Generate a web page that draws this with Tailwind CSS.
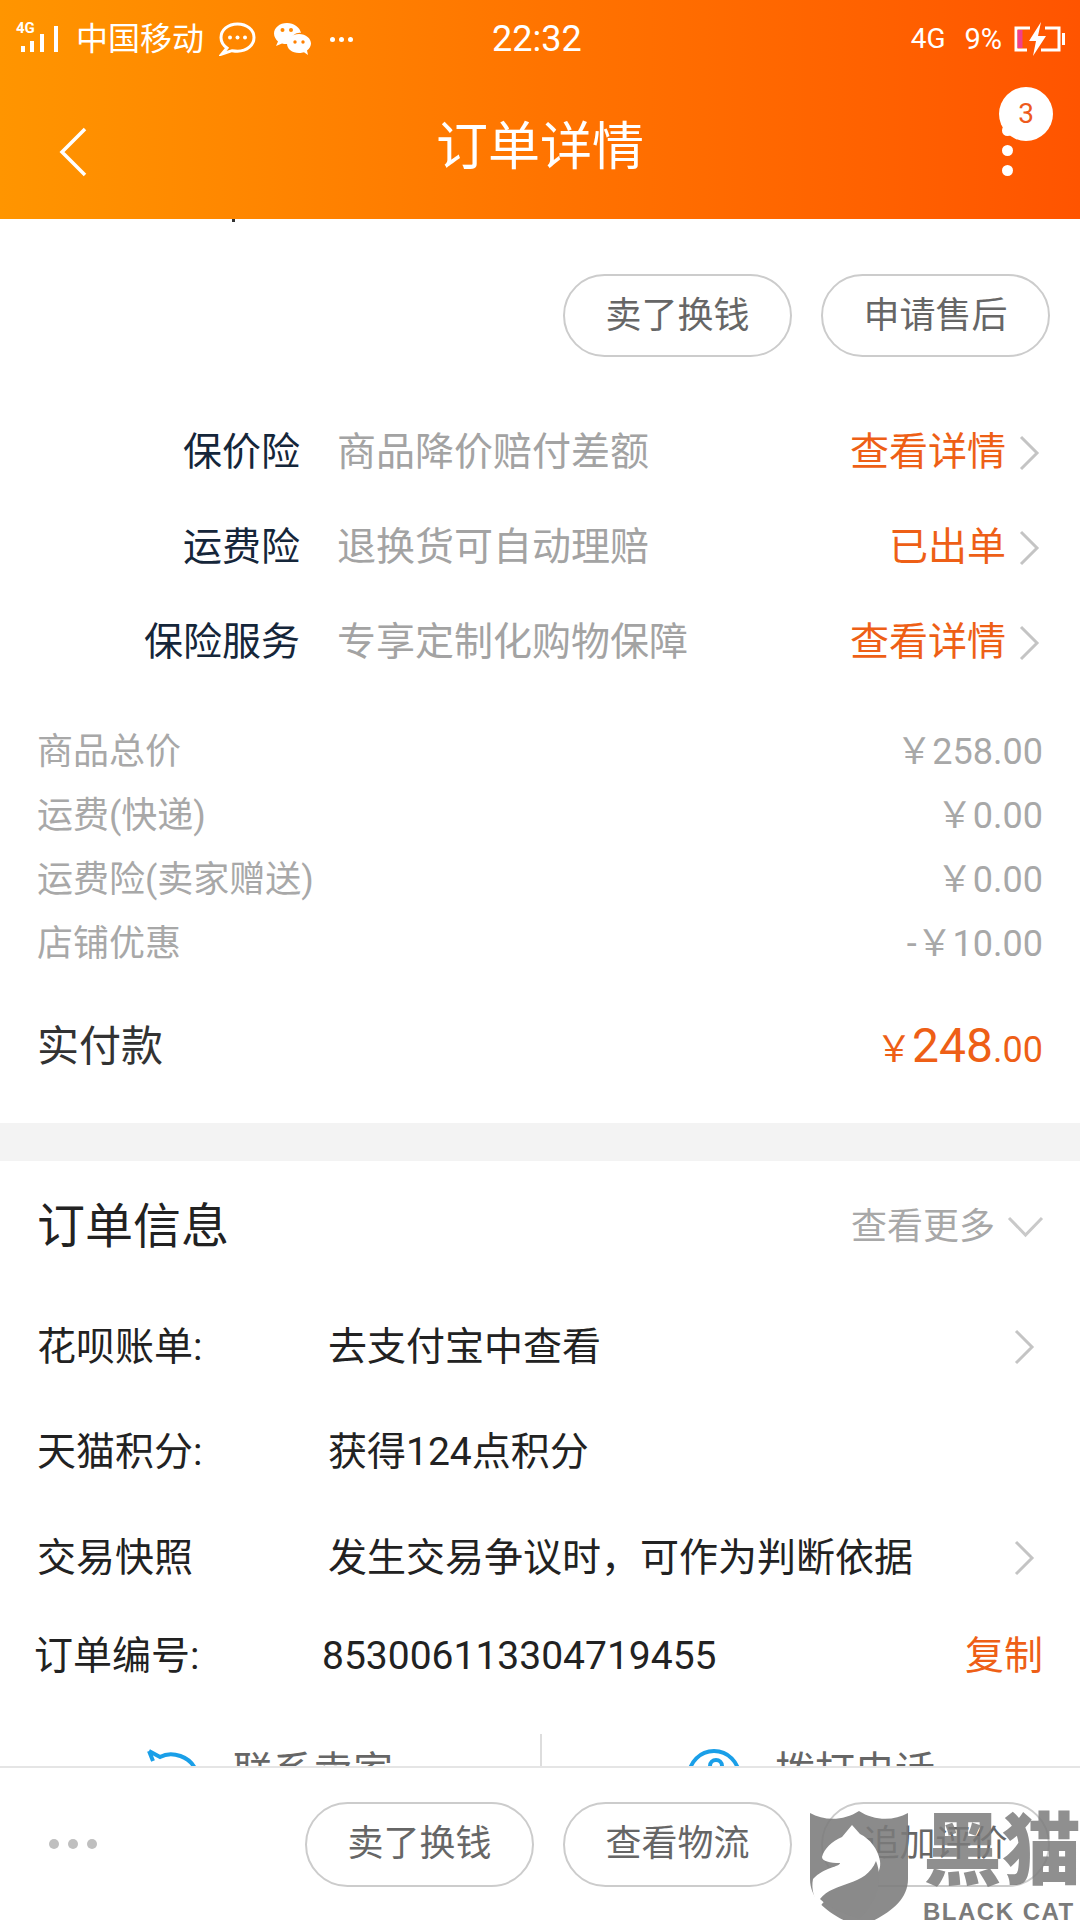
<!DOCTYPE html>
<html lang="zh-CN">
<head>
  <meta charset="UTF-8">
  <title>订单详情</title>
  <script src="https://cdn.jsdelivr.net/npm/@tailwindcss/browser@4"></script>
</head>
<body class="bg-white font-['Roboto','Noto_Sans_CJK_SC',sans-serif]">
<div class="relative flex flex-col w-[1080px] h-[1920px] overflow-hidden bg-white">

  <!-- header -->
  <header class="relative shrink-0 h-[219px] bg-gradient-to-r from-[#ff9500] via-[#ff7400] to-[#ff5400] text-white">
    <div class="relative flex items-center h-[78px] pl-[16px] pr-[15px]">
      <div class="relative w-[46px] h-[30px]">
        <span class="absolute left-0 top-[-3px] text-[15px] font-bold leading-none">4G</span>
        <svg class="absolute left-0 top-0" width="46" height="30" viewBox="0 0 46 30" fill="#fff">
          <rect x="5" y="22" width="4" height="6"/><rect x="14" y="17" width="4" height="11"/><rect x="24" y="10" width="4" height="18"/><rect x="38" y="2" width="4" height="26"/>
        </svg>
      </div>
      <span class="ml-[14px] text-[32px] leading-none">中国移动</span>
      <svg class="ml-[15px]" width="37" height="34" viewBox="0 0 37 34" fill="none">
        <path d="M18.500 2C9 2 2 8 2 15.500C2 20 4.500 23.500 8 26L3 32L13 28.700C15 29 16.500 29.200 18.500 29.200C28 29.200 35 23 35 15.500C35 8 28 2 18.500 2Z" stroke="#fff" stroke-width="3"/>
        <circle cx="11" cy="15.500" r="2" fill="#fff"/><circle cx="18.500" cy="15.500" r="2" fill="#fff"/><circle cx="26" cy="15.500" r="2" fill="#fff"/>
      </svg>
      <svg class="ml-[17px]" width="39" height="34" viewBox="0 0 39 34">
        <path d="M14 1C6.500 1 1 6 1 11.500C1 15 3 17.500 5 19.500L3 24L9 21.500C11 22 13 22.300 15 22C18 12 25 10 28 11C27 5.500 21 1 14 1Z" fill="#fff"/>
        <path d="M26 12C19 12 14 16.500 14 21.500C14 27 19 31 26 31C28 31 29.500 30.700 31 30.200L35 33L34 28.500C36.500 26.500 38 24 38 21.500C38 16.500 33 12 26 12Z" fill="#fff"/>
        <circle cx="9.500" cy="8" r="2" fill="#ff8800"/><circle cx="18" cy="8" r="2" fill="#ff8800"/><circle cx="22" cy="20" r="1.700" fill="#ff8000"/><circle cx="30" cy="20" r="1.700" fill="#ff8000"/>
      </svg>
      <div class="ml-[18px] flex gap-[4px]">
        <span class="w-[5px] h-[5px] rounded-full bg-white"></span><span class="w-[5px] h-[5px] rounded-full bg-white"></span><span class="w-[5px] h-[5px] rounded-full bg-white"></span>
      </div>
      <span class="absolute left-[492px] top-[18px] text-[36px] leading-[42px]">22:32</span>
      <div class="ml-auto flex items-center">
        <span class="text-[28px] leading-none">4G</span>
        <span class="ml-[19px] text-[29px] leading-none">9%</span>
        <svg class="ml-[12px]" width="51" height="34" viewBox="0 0 51 34" fill="none">
          <path d="M16 6H2V28H13" stroke="#fff" stroke-width="3"/>
          <path d="M31 6H45V28H27" stroke="#fff" stroke-width="3"/>
          <rect x="3.500" y="8" width="5" height="18" fill="#f0408c"/>
          <path d="M27 0L15 19H22L19 34L32 14H24Z" fill="#fff"/>
          <rect x="48" y="11" width="3" height="12" fill="#fff"/>
        </svg>
      </div>
    </div>
    <div class="relative flex items-center justify-center h-[141px]">
      <svg class="absolute left-[58px] top-[48px]" width="30" height="52" viewBox="0 0 30 52" fill="none">
        <path d="M27 3L4 26L27 49" stroke="#fff" stroke-width="3.500"/>
      </svg>
      <h1 class="text-[52px] leading-none font-normal mt-[-2px]">订单详情</h1>
      <div class="absolute left-[1002px] top-[47px] flex flex-col gap-[9px]">
        <span class="w-[11px] h-[11px] rounded-full bg-white"></span>
        <span class="w-[11px] h-[11px] rounded-full bg-white"></span>
        <span class="w-[11px] h-[11px] rounded-full bg-white"></span>
      </div>
      <span class="absolute left-[999px] top-[9px] flex items-center justify-center w-[54px] h-[54px] rounded-full bg-white text-[#ee5a1c] text-[28px]">3</span>
    </div>
  </header>

  <!-- scrolled content -->
  <main class="relative flex-1 min-h-0 overflow-hidden">
    <span class="absolute left-[232px] top-0 w-[3px] h-[3px] bg-[#333]"></span>

    <div class="flex justify-end gap-[29px] pt-[55px] pr-[30px]">
      <button class="w-[229px] h-[83px] rounded-full border-2 border-[#cccccc] text-[36px] text-[#666]">卖了换钱</button>
      <button class="w-[229px] h-[83px] rounded-full border-2 border-[#cccccc] text-[36px] text-[#666]">申请售后</button>
    </div>

    <section class="mt-[48px]">
      <div class="flex items-center h-[95px] text-[39px]">
        <span class="w-[300px] text-right text-[#15263a]">保价险</span>
        <span class="ml-[37px] text-[#a3a3a3]">商品降价赔付差额</span>
        <span class="ml-auto text-[#ee5f16]">查看详情</span>
        <svg class="ml-[13px] mr-[40px]" width="21" height="36" viewBox="0 0 21 36" fill="none"><path d="M2 2L18 18L2 34" stroke="#c4c4c4" stroke-width="3"/></svg>
      </div>
      <div class="flex items-center h-[95px] text-[39px]">
        <span class="w-[300px] text-right text-[#15263a]">运费险</span>
        <span class="ml-[37px] text-[#a3a3a3]">退换货可自动理赔</span>
        <span class="ml-auto text-[#ee5f16]">已出单</span>
        <svg class="ml-[13px] mr-[40px]" width="21" height="36" viewBox="0 0 21 36" fill="none"><path d="M2 2L18 18L2 34" stroke="#c4c4c4" stroke-width="3"/></svg>
      </div>
      <div class="flex items-center h-[95px] text-[39px]">
        <span class="w-[300px] text-right text-[#15263a]">保险服务</span>
        <span class="ml-[37px] text-[#a3a3a3]">专享定制化购物保障</span>
        <span class="ml-auto text-[#ee5f16]">查看详情</span>
        <svg class="ml-[13px] mr-[40px]" width="21" height="36" viewBox="0 0 21 36" fill="none"><path d="M2 2L18 18L2 34" stroke="#c4c4c4" stroke-width="3"/></svg>
      </div>
    </section>

    <section class="mt-[30px] px-[37px] text-[36px] text-[#a8a8a8]">
      <div class="flex items-center justify-between h-[64px]"><span>商品总价</span><span>￥258.00</span></div>
      <div class="flex items-center justify-between h-[64px]"><span>运费(快递)</span><span>￥0.00</span></div>
      <div class="flex items-center justify-between h-[64px]"><span>运费险(卖家赠送)</span><span>￥0.00</span></div>
      <div class="flex items-center justify-between h-[64px]"><span>店铺优惠</span><span>-￥10.00</span></div>
    </section>

    <div class="flex items-center justify-between h-[80px] mt-[30px] px-[37px]">
      <span class="text-[42px] text-[#333]">实付款</span>
      <span class="flex items-baseline text-[#ee5f16]"><span class="text-[36px]">￥</span><span class="text-[48px]">248</span><span class="text-[36px]">.00</span></span>
    </div>

    <div class="h-[38px] mt-[37px] bg-[#f3f3f3]"></div>

    <section class="mt-[26px]">
      <div class="flex items-center h-[80px] pl-[37px] pr-[36px]">
        <h2 class="text-[48px] font-normal text-[#222]">订单信息</h2>
        <span class="ml-auto text-[36px] text-[#a8a8a8]">查看更多</span>
        <svg class="ml-[12px]" width="37" height="22" viewBox="0 0 37 22" fill="none"><path d="M2 2L18.500 19L35 2" stroke="#c9c9c9" stroke-width="3"/></svg>
      </div>
      <div class="mt-[27px] flex items-center h-[106px] pl-[37px] text-[39px] text-[#222]">
        <span class="w-[291px]">花呗账单:</span><span>去支付宝中查看</span>
        <svg class="ml-auto mr-[45px]" width="21" height="36" viewBox="0 0 21 36" fill="none"><path d="M2 2L18 18L2 34" stroke="#c4c4c4" stroke-width="3"/></svg>
      </div>
      <div class="flex items-center h-[105px] pl-[37px] text-[39px] text-[#222]">
        <span class="w-[291px]">天猫积分:</span><span>获得124点积分</span>
      </div>
      <div class="flex items-center h-[106px] pl-[37px] text-[39px] text-[#222]">
        <span class="w-[291px]">交易快照</span><span>发生交易争议时，可作为判断依据</span>
        <svg class="ml-auto mr-[45px]" width="21" height="36" viewBox="0 0 21 36" fill="none"><path d="M2 2L18 18L2 34" stroke="#c4c4c4" stroke-width="3"/></svg>
      </div>
      <div class="flex items-center h-[80px] mt-[5px] pl-[34px] pr-[37px] text-[39px] text-[#222]">
        <span class="w-[288px]">订单编号:</span><span>853006113304719455</span>
        <span class="ml-auto text-[#ee5f16]">复制</span>
      </div>
    </section>

    <div class="relative flex h-[80px] mt-[38px]">
      <div class="flex flex-1 pl-[147px] pt-[15px]">
        <svg width="54" height="54" viewBox="0 0 54 54" fill="none">
          <path d="M2 2L6 12M2 2L13 8C24 2 44 6 50 24" stroke="#1a9fe8" stroke-width="4"/>
        </svg>
        <span class="ml-[32px] text-[40px] leading-[46px] text-[#666]">联系卖家</span>
      </div>
      <span class="w-[2px] h-[32px] bg-[#dddddd]"></span>
      <div class="flex flex-1 pl-[145px] pt-[15px]">
        <svg width="54" height="54" viewBox="0 0 54 54" fill="none">
          <circle cx="27" cy="27" r="25" stroke="#1a9fe8" stroke-width="4"/><circle cx="29" cy="17" r="6" stroke="#1a9fe8" stroke-width="4"/>
        </svg>
        <span class="ml-[34px] text-[40px] leading-[46px] text-[#666]">拨打电话</span>
      </div>
    </div>
  </main>

  <!-- bottom bar -->
  <footer class="relative z-10 flex items-center shrink-0 h-[154px] pl-[49px] pr-[30px] bg-white border-t-2 border-[#e5e5e5]">
    <div class="flex gap-[9px]">
      <span class="w-[10px] h-[10px] rounded-full bg-[#bfbfbf]"></span><span class="w-[10px] h-[10px] rounded-full bg-[#bfbfbf]"></span><span class="w-[10px] h-[10px] rounded-full bg-[#bfbfbf]"></span>
    </div>
    <div class="ml-auto flex gap-[29px]">
      <button class="w-[229px] h-[85px] rounded-full border-2 border-[#cccccc] text-[36px] text-[#666]">卖了换钱</button>
      <button class="w-[229px] h-[85px] rounded-full border-2 border-[#cccccc] text-[36px] text-[#666]">查看物流</button>
      <button class="w-[229px] h-[85px] rounded-full border-2 border-[#cccccc] text-[36px] text-[#666]">追加评价</button>
    </div>
  </footer>

  <!-- watermark -->
  <div class="absolute z-20 left-[810px] top-[1811px] w-[270px] h-[109px] pointer-events-none">
    <svg class="absolute left-0 top-0" width="98" height="116" viewBox="0 0 98 116">
      <path d="M0 2C14 10 34 10 49 0C64 10 84 10 98 2V68C98 92 74 106 49 116C24 106 0 92 0 68Z" fill="#7b7b7b" fill-opacity="0.88"/>
      <path d="M42 14L50 23C60 28 68 38 70 50C72 64 60 72 44 76C28 80 14 88 10 96C4 88 1 78 3 68C14 56 30 56 30 52C20 52 12 50 12 46C14 38 22 30 32 26Z" fill="#fff"/>
      <path d="M10 88C24 70 56 76 66 50C74 70 66 92 49 108C34 102 20 98 10 88Z" fill="#8a8a8a"/>
      <path d="M8 84C16 72 34 70 48 66" stroke="#fff" stroke-width="3" fill="none"/>
    </svg>
    <span class="absolute left-[113px] top-[-4px] text-[79px] leading-[90px] font-black text-[#7b7b7b]/85 whitespace-nowrap">黑猫</span>
    <span class="absolute left-[113px] top-[90px] text-[24px] leading-[22px] font-black tracking-[1.500px] text-[#7b7b7b] whitespace-nowrap font-['Liberation_Sans',sans-serif]">BLACK CAT</span>
  </div>
</div>
</body>
</html>
